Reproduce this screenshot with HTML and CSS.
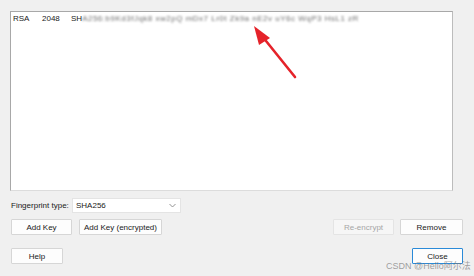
FILE: index.html
```
<!DOCTYPE html>
<html lang="en">
<head>
    <meta charset="UTF-8" />
    <title>Key list</title>
    <link rel="stylesheet" href="styles.css">
</head>
<body>

<div class="dialog">
    <div class="key-list">
        <div class="key-row">
            <span class="col-type">RSA</span>
            <span class="col-bits">2048</span>
            <span class="col-fp">SH<span class="blurred">A256:b9Kd3fJqk8 xw2pQ mDx7 Lr0t Zk9a nE2v uY6c WqP3 HsL1 zR</span></span>
        </div>
    </div>

    <div class="fp-row">
        <label class="fp-label">Fingerprint type:</label>
        <div class="select">
            <span>SHA256</span>
            <svg class="chevron" width="7" height="5" viewBox="0 0 7 5"><path d="M0.5 1 L3.5 4 L6.5 1" fill="none" stroke="#888" stroke-width="0.9"/></svg>
        </div>
    </div>

    <div class="btn-row">
        <button class="btn w-add">Add Key</button>
        <button class="btn w-enc">Add Key (encrypted)</button>
        <span class="spacer"></span>
        <button class="btn w-reenc" disabled>Re-encrypt</button>
        <button class="btn w-remove">Remove</button>
    </div>

    <div class="btn-row bottom">
        <button class="btn w-help">Help</button>
        <span class="spacer"></span>
        <button class="btn w-close default">Close</button>
    </div>
</div>

<svg class="arrow" width="474" height="276" viewBox="0 0 474 276">
    <line x1="295" y1="77" x2="262" y2="36" stroke="#e5232a" stroke-width="2.6" stroke-linecap="round"/>
    <polygon points="254,26 270,38 259,45" fill="#e5232a"/>
</svg>

<div class="watermark">CSDN @Hello阿尔法</div>

</body>
</html>
```

FILE: styles.css
```
body {
    margin: 0;
    width: 474px;
    height: 276px;
    overflow: hidden;
    background: #f0f0f0;
    font-family: 'Liberation Sans', 'Noto Sans CJK SC', sans-serif;
    font-size: 8px;
    color: #1a1a1a;
    position: relative;
}

.dialog {
    display: flex;
    flex-direction: column;
    padding: 11px 11px 0 10px;
}

.key-list {
    width: 441px;
    height: 178px;
    background: #fff;
    border: 1px solid #a8a8a8;
    border-right-color: #bcbcbc;
    border-bottom-color: #dcdcdc;
}

.key-row {
    display: flex;
    height: 13px;
    line-height: 13px;
    padding-left: 2px;
}

.col-type { width: 29px; }
.col-bits { width: 29px; }

.blurred {
    color: #6e6e6e;
    filter: blur(1.1px);
    letter-spacing: 0.5px;
}

.fp-row {
    display: flex;
    align-items: center;
    margin-top: 7px;
    height: 15px;
}

.fp-label {
    flex: none;
    width: 61px;
    padding-left: 1px;
    white-space: nowrap;
}

.select {
    display: flex;
    align-items: center;
    justify-content: space-between;
    width: 100px;
    height: 13px;
    padding: 0 4px 0 3px;
    background: #fff;
    border: 1px solid #e4e4e4;
}

.btn-row {
    display: flex;
    align-items: center;
    gap: 7px;
    margin-top: 6px;
}

.btn-row.bottom {
    margin-top: 13px;
}

.spacer { flex: 1; }

.btn {
    height: 16px;
    padding: 0;
    font-family: inherit;
    font-size: 8px;
    color: #1a1a1a;
    background: #fdfdfd;
    border: 1px solid #d6d6d6;
    border-radius: 1px;
    white-space: nowrap;
}

.btn:disabled {
    color: #a6a6a6;
    background: #f6f6f6;
    border-color: #e4e4e4;
}

.btn.default {
    border-color: #2a8ad8;
}

.w-add { width: 61px; margin-left: 1px; }
.w-enc { width: 83px; }
.w-reenc { width: 61px; margin-right: -1px; }
.w-remove { width: 63px; }
.w-help { width: 52px; margin-left: 1px; }
.w-close { width: 51px; }

.arrow {
    position: absolute;
    left: 0;
    top: 0;
}

.watermark {
    position: absolute;
    left: 386px;
    top: 261px;
    font-size: 9px;
    line-height: 11px;
    color: rgba(120, 120, 120, 0.7);
    white-space: nowrap;
}
```
